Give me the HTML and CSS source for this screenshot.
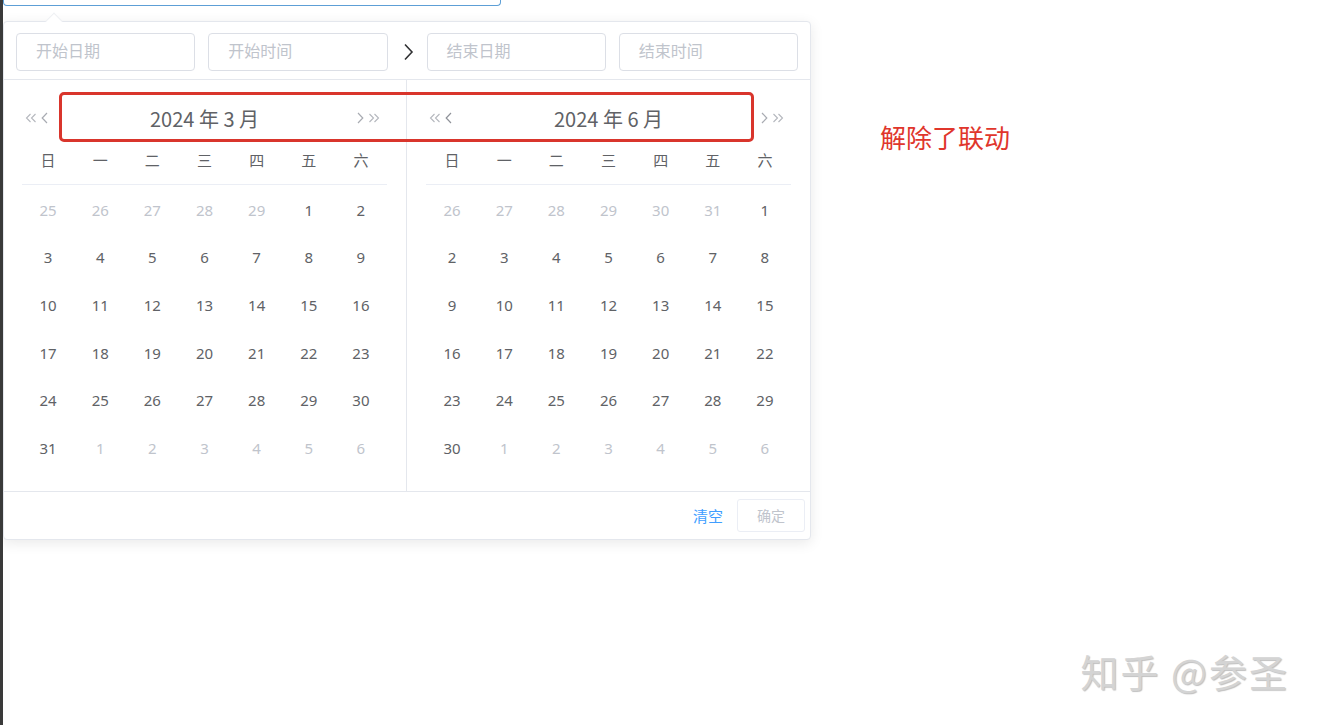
FILE: index.html
```html
<!DOCTYPE html>
<html lang="zh">
<head>
<meta charset="utf-8">
<title>日期时间范围选择</title>
<link rel="stylesheet" href="styles.css">
</head>
<body>
<div class="page">
  <div class="top-input"></div>
  <div class="stage">
    <div class="picker">
      <div class="picker-arrow"></div>
      <div class="picker-head">
        <div class="field">开始日期</div>
        <div class="field">开始时间</div>
        <div class="sep">
          <svg width="11" height="18" viewBox="0 0 11 18"><path d="M2 1.5 L9 9 L2 16.5" fill="none" stroke="#303133" stroke-width="1.6"/></svg>
        </div>
        <div class="field">结束日期</div>
        <div class="field">结束时间</div>
      </div>
      <div class="picker-body">
        <div class="panel panel-left">
          <div class="cal-head">
            <div class="nav">
              <svg class="ic-d" width="12" height="10" viewBox="0 0 12 10"><path d="M5.5 1 L1.5 5 L5.5 9 M10.5 1 L6.5 5 L10.5 9" fill="none" stroke="#b4b7bd" stroke-width="1.1"/></svg>
              <svg class="ic-s" width="7" height="12" viewBox="0 0 7 12"><path d="M6 1 L1.2 6 L6 11" fill="none" stroke="#a8abb2" stroke-width="1.2"/></svg>
            </div>
            <div class="cal-title">2024 年 3 月</div>
            <div class="nav">
              <svg class="ic-s" width="7" height="12" viewBox="0 0 7 12"><path d="M1 1 L5.8 6 L1 11" fill="none" stroke="#a8abb2" stroke-width="1.2"/></svg>
              <svg class="ic-d" width="12" height="10" viewBox="0 0 12 10"><path d="M1.5 1 L5.5 5 L1.5 9 M6.5 1 L10.5 5 L6.5 9" fill="none" stroke="#b4b7bd" stroke-width="1.1"/></svg>
            </div>
          </div>
          <div class="week"><span>日</span><span>一</span><span>二</span><span>三</span><span>四</span><span>五</span><span>六</span></div>
          <div class="days">
            <span class="off">25</span><span class="off">26</span><span class="off">27</span><span class="off">28</span><span class="off">29</span><span>1</span><span>2</span>
            <span>3</span><span>4</span><span>5</span><span>6</span><span>7</span><span>8</span><span>9</span>
            <span>10</span><span>11</span><span>12</span><span>13</span><span>14</span><span>15</span><span>16</span>
            <span>17</span><span>18</span><span>19</span><span>20</span><span>21</span><span>22</span><span>23</span>
            <span>24</span><span>25</span><span>26</span><span>27</span><span>28</span><span>29</span><span>30</span>
            <span>31</span><span class="off">1</span><span class="off">2</span><span class="off">3</span><span class="off">4</span><span class="off">5</span><span class="off">6</span>
          </div>
        </div>
        <div class="panel panel-right">
          <div class="cal-head">
            <div class="nav">
              <svg class="ic-d" width="12" height="10" viewBox="0 0 12 10"><path d="M5.5 1 L1.5 5 L5.5 9 M10.5 1 L6.5 5 L10.5 9" fill="none" stroke="#b4b7bd" stroke-width="1.1"/></svg>
              <svg class="ic-s" width="7" height="12" viewBox="0 0 7 12"><path d="M6 1 L1.2 6 L6 11" fill="none" stroke="#8f9299" stroke-width="1.2"/></svg>
            </div>
            <div class="cal-title">2024 年 6 月</div>
            <div class="nav">
              <svg class="ic-s" width="7" height="12" viewBox="0 0 7 12"><path d="M1 1 L5.8 6 L1 11" fill="none" stroke="#a8abb2" stroke-width="1.2"/></svg>
              <svg class="ic-d" width="12" height="10" viewBox="0 0 12 10"><path d="M1.5 1 L5.5 5 L1.5 9 M6.5 1 L10.5 5 L6.5 9" fill="none" stroke="#b4b7bd" stroke-width="1.1"/></svg>
            </div>
          </div>
          <div class="week"><span>日</span><span>一</span><span>二</span><span>三</span><span>四</span><span>五</span><span>六</span></div>
          <div class="days">
            <span class="off">26</span><span class="off">27</span><span class="off">28</span><span class="off">29</span><span class="off">30</span><span class="off">31</span><span>1</span>
            <span>2</span><span>3</span><span>4</span><span>5</span><span>6</span><span>7</span><span>8</span>
            <span>9</span><span>10</span><span>11</span><span>12</span><span>13</span><span>14</span><span>15</span>
            <span>16</span><span>17</span><span>18</span><span>19</span><span>20</span><span>21</span><span>22</span>
            <span>23</span><span>24</span><span>25</span><span>26</span><span>27</span><span>28</span><span>29</span>
            <span>30</span><span class="off">1</span><span class="off">2</span><span class="off">3</span><span class="off">4</span><span class="off">5</span><span class="off">6</span>
          </div>
        </div>
        <div class="highlight"></div>
      </div>
      <div class="picker-foot">
        <span class="link">清空</span>
        <button class="btn" type="button">确定</button>
      </div>
    </div>
    <div class="note">解除了联动</div>
  </div>
  <div class="watermark">知乎 @参圣</div>
</div>
</body>
</html>
```

FILE: styles.css
```css
* { box-sizing: border-box; }

html, body {
  margin: 0;
  padding: 0;
  background: #ffffff;
}

body {
  font-family: "Noto Sans", "Noto Sans CJK SC", sans-serif;
  color: #606266;
}

.page {
  position: relative;
  width: 1320px;
  height: 725px;
  border-left: 3px solid #3a3a3a;
  overflow: hidden;
}

.top-input {
  width: 498px;
  height: 6px;
  border: 1px solid #5d9fd6;
  border-top: none;
  border-radius: 0 0 4px 4px;
}

.stage {
  display: flex;
  align-items: flex-start;
  margin-top: 15px;
}

.picker {
  position: relative;
  width: 808px;
  background: #fff;
  border: 1px solid #e4e7ed;
  border-radius: 4px;
  box-shadow: 0 3px 14px rgba(0, 0, 0, 0.09);
}

.picker-arrow {
  position: absolute;
  top: -7px;
  left: 44px;
  width: 12px;
  height: 12px;
  background: #fff;
  border-top: 1px solid #eef0f3;
  border-left: 1px solid #eef0f3;
  transform: rotate(45deg);
}

.picker-head {
  display: flex;
  align-items: center;
  padding: 11px 12px 8px;
  border-bottom: 1px solid #e4e7ed;
}

.field {
  flex: 1;
  height: 38px;
  border: 1px solid #dcdfe6;
  border-radius: 4px;
  padding-left: 19px;
  font-size: 16px;
  line-height: 33px;
  color: #c0c4cc;
  font-family: "Noto Sans CJK SC", sans-serif;
}

.field + .field {
  margin-left: 13px;
}

.sep {
  width: 39px;
  display: flex;
  justify-content: center;
  align-items: center;
  padding-left: 2px;
}

.picker-body {
  position: relative;
  display: flex;
}

.panel {
  flex: 1;
  padding: 20px 19px 19px 19px;
}

.panel-left {
  border-right: 1px solid #e4e7ed;
  padding-left: 18px;
}

.cal-head {
  display: flex;
  align-items: center;
  height: 36px;
  padding: 0 3px;
}

.nav {
  display: flex;
  align-items: center;
  gap: 4px;
  width: 27px;
}

.cal-title {
  flex: 1;
  text-align: center;
  font-size: 20px;
  color: #606266;
  font-family: "Noto Sans CJK SC", sans-serif;
  padding-top: 1px;
}

.week {
  display: grid;
  grid-template-columns: repeat(7, 1fr);
  height: 49px;
  border-bottom: 1px solid #ebeef5;
  align-items: center;
  text-align: center;
  font-size: 15px;
  color: #606266;
  font-family: "Noto Sans CJK SC", sans-serif;
  padding-bottom: 2px;
}

.days {
  display: grid;
  grid-template-columns: repeat(7, 1fr);
  grid-auto-rows: 47.6px;
  align-items: center;
  text-align: center;
  font-size: 15px;
  color: #606266;
  padding-top: 1px;
}

.days .off {
  color: #c0c4cc;
}

.highlight {
  position: absolute;
  left: 55px;
  top: 12px;
  width: 695px;
  height: 50px;
  border: 3px solid #d9352c;
  border-radius: 5px;
}

.picker-foot {
  display: flex;
  justify-content: flex-end;
  align-items: center;
  height: 48px;
  border-top: 1px solid #e4e7ed;
  padding: 0 5px;
}

.link {
  font-size: 15px;
  color: #409eff;
  margin-right: 14px;
  font-family: "Noto Sans CJK SC", sans-serif;
}

.btn {
  width: 68px;
  height: 33px;
  border: 1px solid #ebeef5;
  border-radius: 3px;
  background: #fff;
  color: #c0c4cc;
  font-size: 14px;
  font-family: "Noto Sans CJK SC", sans-serif;
}

.note {
  margin-left: 69px;
  margin-top: 101px;
  font-size: 26px;
  line-height: 30px;
  color: #e0362c;
  font-family: "Noto Sans CJK SC", sans-serif;
}

.watermark {
  position: absolute;
  right: 31px;
  bottom: 33px;
  font-size: 38px;
  line-height: 42px;
  letter-spacing: 2px;
  color: #d4d4d4;
  font-weight: 400;
  text-shadow: 1px 1px 1px rgba(0, 0, 0, 0.25);
  font-family: "Noto Sans CJK SC", sans-serif;
}
```
